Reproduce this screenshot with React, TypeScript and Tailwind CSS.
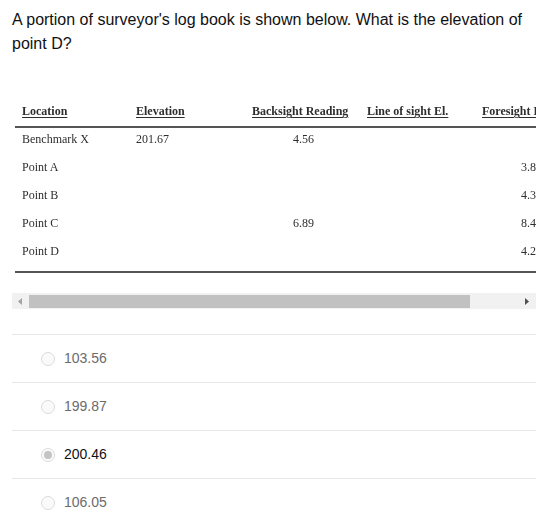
import React from "react";

const rows: { loc: string; elev?: string; bs?: string; fs?: string }[] = [
  { loc: "Benchmark X", elev: "201.67", bs: "4.56" },
  { loc: "Point A", fs: "3.8" },
  { loc: "Point B", fs: "4.3" },
  { loc: "Point C", bs: "6.89", fs: "8.4" },
  { loc: "Point D", fs: "4.2" },
];

const options = [
  { v: "103.56", sel: false },
  { v: "199.87", sel: false },
  { v: "200.46", sel: true },
  { v: "106.05", sel: false },
];

const cols = "grid grid-cols-[114px_116px_115px_115px_54px]";

export default function App() {
  return (
    <div className="w-[555px] h-[524px] bg-white overflow-hidden font-['Liberation_Sans',Arial,sans-serif]">
      <p className="pt-[8px] px-[12px] text-[16px] leading-[24px] text-[#111]">
        A portion of surveyor's log book is shown below. What is the elevation of point D?
      </p>

      <div className="mx-[12px] mt-[45px] w-[524px] overflow-hidden">
        <div className="w-[524px] font-['Liberation_Serif','Times_New_Roman',serif] text-[#2e2e2e] blur-[0.25px]">
          <div className={`${cols} pl-[10px] h-[20px] items-center text-[12px] font-bold underline underline-offset-2 whitespace-nowrap`}>
            <span>Location</span>
            <span>Elevation</span>
            <span>Backsight Reading</span>
            <span>Line of sight El.</span>
            <span className="overflow-hidden">Foresight R</span>
          </div>
          <div className="ml-[3px] mt-[5px] h-[2px] bg-[#555]" />
          <div className="mt-[-3px]">
            {rows.map((r) => (
              <div key={r.loc} className={`${cols} pl-[10px] h-[28px] items-center text-[12px] whitespace-nowrap`}>
                <span>{r.loc}</span>
                <span>{r.elev ?? ""}</span>
                <span className="pl-[41px]">{r.bs ?? ""}</span>
                <span />
                <span className="text-right">{r.fs ?? ""}</span>
              </div>
            ))}
          </div>
          <div className="ml-[3px] mt-[6px] h-[2px] bg-[#555]" />
        </div>
      </div>

      <div className="mx-[12px] mt-[20px] w-[524px] h-[16px] bg-[#f1f1f1] flex items-center">
        <div className="w-[17px] flex justify-center">
          <svg width="5" height="7" viewBox="0 0 5 7">
            <path d="M4 0 L0 3.5 L4 7 Z" fill="#a3a3a3" />
          </svg>
        </div>
        <div className="w-[441px] h-[13px] bg-[#c1c1c1]" />
        <div className="flex-1 flex justify-end pr-[7px]">
          <svg width="5" height="7" viewBox="0 0 5 7">
            <path d="M1 0 L5 3.5 L1 7 Z" fill="#505050" />
          </svg>
        </div>
      </div>

      <div className="mx-[12px] mt-[25px] w-[524px] border-t border-[#e6e6e6]">
        {options.map((o) => (
          <div key={o.v} className="h-[48px] border-b border-[#e6e6e6] flex items-center pl-[29px]">
            <span className="w-[14px] h-[14px] rounded-full border border-[#dcdcdc] bg-[#fafafa] flex items-center justify-center">
              {o.sel && <span className="w-[8px] h-[8px] rounded-full bg-[#c4c4c4]" />}
            </span>
            <span className={`ml-[9px] text-[14px] ${o.sel ? "text-[#111]" : "text-[#6b6b6b]"}`}>{o.v}</span>
          </div>
        ))}
      </div>
    </div>
  );
}
